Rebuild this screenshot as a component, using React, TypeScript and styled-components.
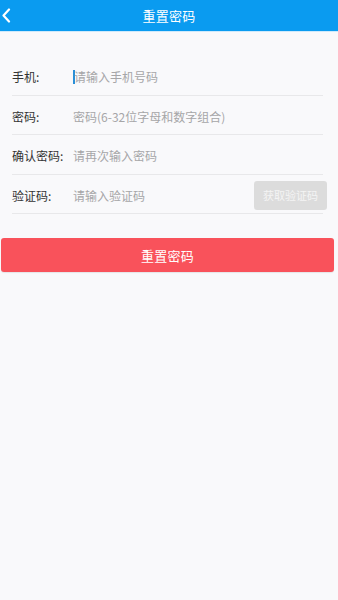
import React from 'react';
import styled, { createGlobalStyle } from 'styled-components';

const GlobalStyle = createGlobalStyle`
  html, body {
    margin: 0;
    padding: 0;
    background: #f9f9fb;
    font-family: "Noto Sans CJK SC", "Noto Sans", sans-serif;
  }
`;

const Page = styled.div`
  width: 338px;
  min-height: 600px;
  background: #f9f9fb;
`;

const Header = styled.header`
  height: 31px;
  background: #0a9bf0;
  display: flex;
  align-items: center;
  justify-content: center;
  position: relative;
  border-bottom: 1px solid #cfeafb;
`;

const Back = styled.div`
  position: absolute;
  left: 1px;
  top: 8px;
  width: 10px;
  height: 15px;
  display: flex;
`;

const Title = styled.h1`
  margin: 0;
  font-size: 13px;
  font-weight: 400;
  color: #ffffff;
  letter-spacing: 0.3px;
`;

const Form = styled.div`
  padding: 24px 15px 0 12px;
  display: flex;
  flex-direction: column;
`;

const Row = styled.div`
  height: 39.5px;
  box-sizing: border-box;
  padding-top: 3px;
  display: flex;
  align-items: center;
  border-bottom: 1px solid #e8e8ea;
`;

const Label = styled.span`
  width: 61px;
  flex-shrink: 0;
  font-size: 12px;
  color: #333;
`;

const Field = styled.div`
  flex: 1;
  display: flex;
  align-items: center;
  font-size: 12px;
  color: #a6a6a8;
`;

const Caret = styled.span`
  width: 2px;
  height: 14px;
  background: #2a8fd8;
  margin-right: -1px;
`;

const CodeButton = styled.button`
  width: 73px;
  height: 29px;
  margin-right: -4px;
  border: none;
  border-radius: 3px;
  background: #dcdcdc;
  color: #f4f4f4;
  font-family: inherit;
  font-size: 11px;
  padding: 0;
`;

const Submit = styled.button`
  display: block;
  margin: 24px 4px 0 1px;
  width: 333px;
  height: 34px;
  border: none;
  border-radius: 3px;
  background: #f9525b;
  color: #ffffff;
  font-family: inherit;
  font-size: 13px;
  letter-spacing: 0.3px;
  box-shadow: 0 1px 1px rgba(0, 0, 0, 0.08);
`;

export default function App() {
  return (
    <>
      <GlobalStyle />
      <Page>
        <Header>
          <Back>
            <svg width="10" height="15" viewBox="0 0 10 15">
              <path d="M8 1.5 L2.5 7.5 L8 13.5" fill="none" stroke="#fff" strokeWidth="2.2" strokeLinecap="round" strokeLinejoin="round" />
            </svg>
          </Back>
          <Title>重置密码</Title>
        </Header>
        <Form>
          <Row>
            <Label>手机:</Label>
            <Field>
              <Caret />
              请输入手机号码
            </Field>
          </Row>
          <Row>
            <Label>密码:</Label>
            <Field>密码(6-32位字母和数字组合)</Field>
          </Row>
          <Row>
            <Label>确认密码:</Label>
            <Field>请再次输入密码</Field>
          </Row>
          <Row>
            <Label>验证码:</Label>
            <Field>请输入验证码</Field>
            <CodeButton>获取验证码</CodeButton>
          </Row>
        </Form>
        <Submit>重置密码</Submit>
      </Page>
    </>
  );
}
